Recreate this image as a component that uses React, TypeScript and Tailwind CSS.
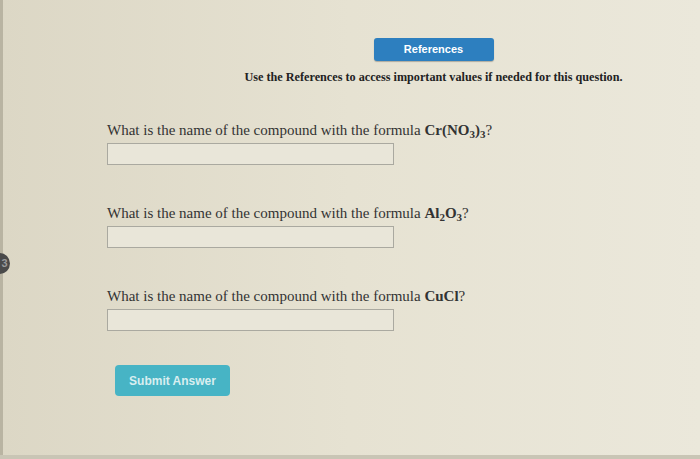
import React from 'react';

const serif = { fontFamily: '"Liberation Serif", "Times New Roman", serif' };

const Question: React.FC<{ children: React.ReactNode; className?: string }> = ({ children, className }) => (
  <div className={className}>
    <p className="text-[15px] leading-[18px] text-[#333]" style={serif}>
      What is the name of the compound with the formula {children}?
    </p>
    <div className="mt-[4px] h-[22px] w-[287px] border border-[#aaa9a0] bg-[#e9e6d9]" />
  </div>
);

const App: React.FC = () => {
  return (
    <div className="relative h-[459px] w-[700px] overflow-hidden bg-gradient-to-r from-[#dcd7c5] via-[#e6e2d2] to-[#ebe8db]">
      <div className="absolute left-0 top-0 h-full w-[3px] bg-[#b9b4a2]" />
      <div className="absolute bottom-0 left-0 h-[4px] w-full bg-[#c9c5b5]" />
      <div className="absolute left-[-11px] top-[253px] flex h-[21px] w-[21px] items-center justify-center rounded-full bg-[#4a4a4a]">
        <span className="pl-[10px] text-[11px] font-bold text-[#9a9a9a]" style={{ fontFamily: '"Liberation Sans", Arial, sans-serif' }}>3</span>
      </div>

      <div className="flex flex-col pl-[107px] pt-[38px]">
        <div className="ml-[138px] flex w-[377px] flex-col items-center">
          <button
            className="h-[23px] w-[120px] rounded-[3px] bg-[#2d7fbf] text-[11px] font-bold text-white shadow-[0_1px_1px_rgba(0,0,0,0.25)]"
            style={{ fontFamily: '"Liberation Sans", Arial, sans-serif' }}
          >
            References
          </button>
          <p className="mt-[8px] whitespace-nowrap text-[12.2px] font-bold leading-[16px] text-[#222]" style={serif}>
            Use the References to access important values if needed for this question.
          </p>
        </div>

        <Question className="mt-[36px]">
          <b>
            Cr(NO<sub className="text-[11px]">3</sub>)<sub className="text-[11px]">3</sub>
          </b>
        </Question>

        <Question className="mt-[39px]">
          <b>
            Al<sub className="text-[11px]">2</sub>O<sub className="text-[11px]">3</sub>
          </b>
        </Question>

        <Question className="mt-[39px]">
          <b>CuCl</b>
        </Question>

        <button
          className="ml-[8px] mt-[34px] h-[31px] w-[115px] rounded-[4px] bg-[#47b4c5] text-[12px] font-bold text-[#d9eef0]"
          style={{ fontFamily: '"Liberation Sans", Arial, sans-serif' }}
        >
          Submit Answer
        </button>
      </div>
    </div>
  );
};

export default App;
